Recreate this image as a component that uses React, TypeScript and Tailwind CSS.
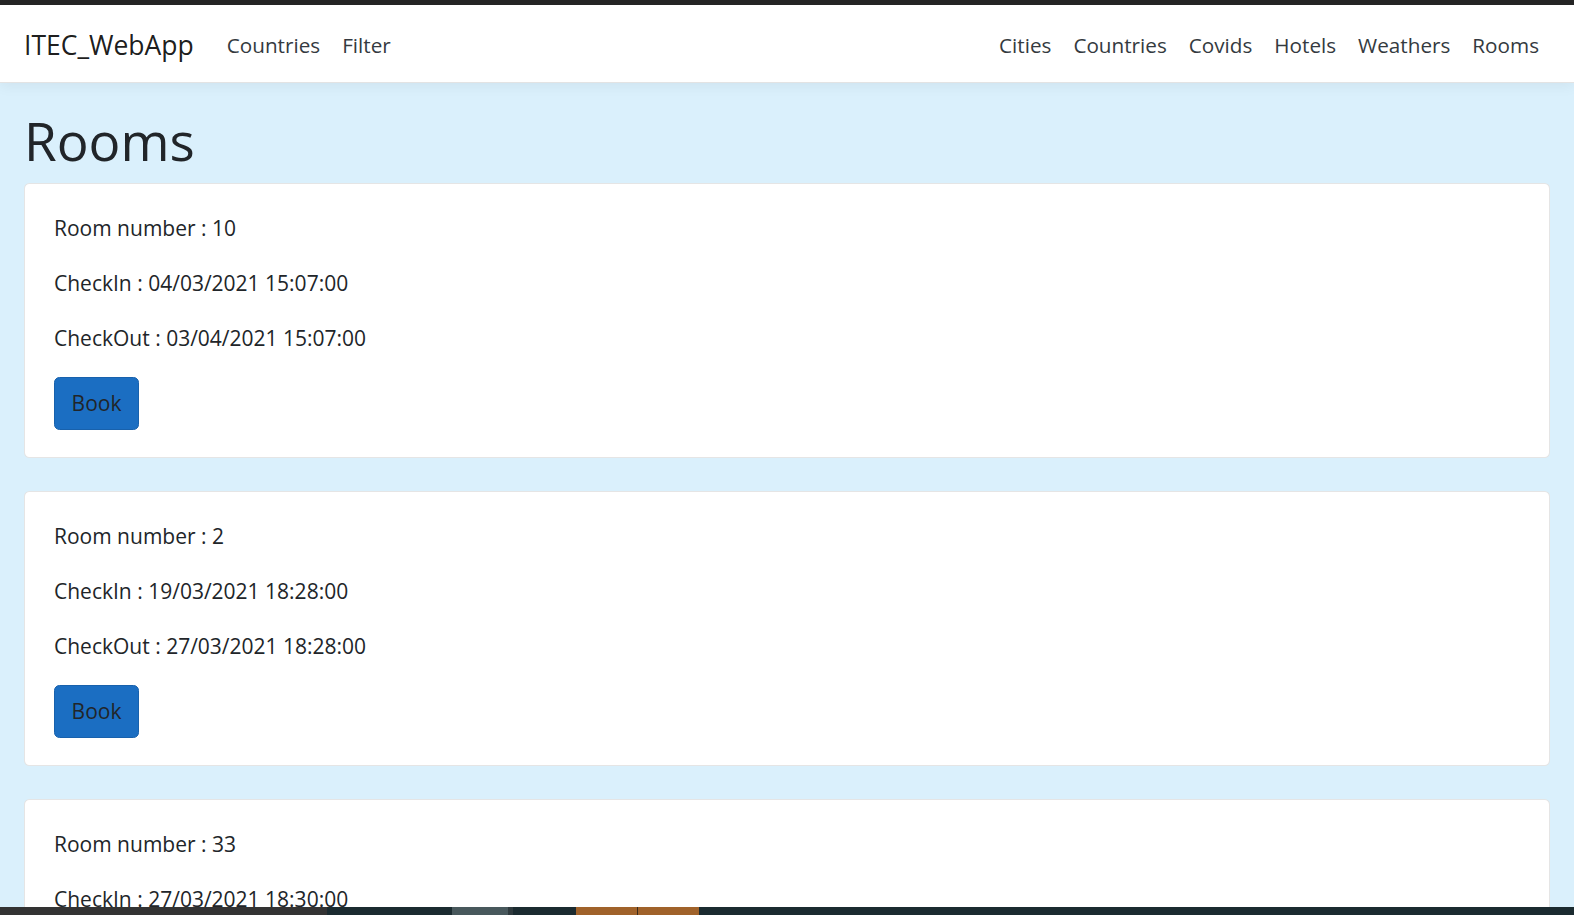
import React from 'react'

const LEFT_LINKS = ['Countries', 'Filter']
const RIGHT_LINKS = ['Cities', 'Countries', 'Covids', 'Hotels', 'Weathers', 'Rooms']

const ROOMS = [
  { number: 10, checkIn: '04/03/2021 15:07:00', checkOut: '03/04/2021 15:07:00' },
  { number: 2, checkIn: '19/03/2021 18:28:00', checkOut: '27/03/2021 18:28:00' },
  { number: 33, checkIn: '27/03/2021 18:30:00', checkOut: '30/03/2021 18:30:00' },
]

// strip along the bottom edge of the capture (window task bar)
const TASKBAR = [
  { w: 'w-[327px]', bg: 'bg-[#333333]' },
  { w: 'w-[125px]', bg: 'bg-[#1b2b30]' },
  { w: 'w-[56px]', bg: 'bg-[#48585c]' },
  { w: 'w-[5px]', bg: 'bg-[#2f3a3e]' },
  { w: 'w-[63px]', bg: 'bg-[#1b2b30]' },
  { w: 'w-[61px]', bg: 'bg-[#a0622a]' },
  { w: 'w-[1px]', bg: 'bg-[#3a2a1a]' },
  { w: 'w-[61px]', bg: 'bg-[#a0622a]' },
]

function NavLink({ label }: { label: string }) {
  return (
    <a href="#" className="px-[11px] text-[20.7px] leading-[33px] text-[#343a40]">
      {label}
    </a>
  )
}

export default function App() {
  return (
    <div className="relative h-screen overflow-hidden bg-[#daf0fc] font-['Open_Sans',sans-serif] text-[#212529]">
      <div className="h-[5px] bg-[#252525]" />

      {/* Navbar */}
      <header className="relative z-10 flex h-[78px] items-center border-b border-[#e3e3e3] bg-white px-6 shadow-[0_4px_12px_rgba(0,0,0,0.05)]">
        <a href="#" className="mr-[22px] mt-[4px] text-[26.5px] leading-[41px] text-black/90">
          ITEC_WebApp
        </a>
        <nav className="mt-[4px] flex">
          {LEFT_LINKS.map(l => (
            <NavLink key={l} label={l} />
          ))}
        </nav>
        <nav className="ml-auto mt-[4px] flex">
          {RIGHT_LINKS.map(l => (
            <NavLink key={l} label={l} />
          ))}
        </nav>
      </header>

      {/* Content */}
      <main className="px-6 pt-[25px]">
        <h1 className="mb-[9px] text-[53px] font-medium leading-[66px]">Rooms</h1>

        {ROOMS.map(room => (
          <div
            key={room.number}
            className="mb-[33px] rounded-[5.5px] border border-black/10 bg-white px-[29px] pb-[27px] pt-[28px] text-[21px] leading-[33px]"
          >
            <p className="mb-[22px]">Room number : {room.number}</p>
            <p className="mb-[22px]">CheckIn : {room.checkIn}</p>
            <p className="mb-[22px]">CheckOut : {room.checkOut}</p>
            <button className="h-[53px] w-[85px] rounded-[5.5px] border border-[#1861ac] bg-[#1b6ec2] text-[21px] text-[#212529]">
              Book
            </button>
          </div>
        ))}
      </main>

      <div className="absolute bottom-0 left-0 right-0 flex h-[8px]">
        {TASKBAR.map((s, i) => (
          <div key={i} className={`${s.w} ${s.bg}`} />
        ))}
        <div className="flex-1 bg-[#1b2b30]" />
      </div>
    </div>
  )
}
